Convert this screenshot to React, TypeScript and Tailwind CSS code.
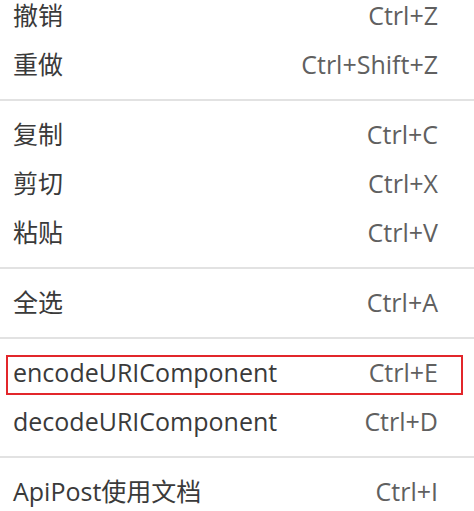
import React from 'react'

type Item = { label: string; shortcut: string; marked?: boolean }

const groups: Item[][] = [
  [
    { label: '撤销', shortcut: 'Ctrl+Z' },
    { label: '重做', shortcut: 'Ctrl+Shift+Z' },
  ],
  [
    { label: '复制', shortcut: 'Ctrl+C' },
    { label: '剪切', shortcut: 'Ctrl+X' },
    { label: '粘贴', shortcut: 'Ctrl+V' },
  ],
  [{ label: '全选', shortcut: 'Ctrl+A' }],
  [
    { label: 'encodeURIComponent', shortcut: 'Ctrl+E', marked: true },
    { label: 'decodeURIComponent', shortcut: 'Ctrl+D' },
  ],
  [{ label: 'ApiPost使用文档', shortcut: 'Ctrl+I' }],
]

function MenuRow({ item, first }: { item: Item; first?: boolean }) {
  return (
    <div
      className={
        first
          ? 'relative flex h-[40px] items-center justify-between pb-[9px] pl-[13px] pr-[36px]'
          : 'relative flex h-[49px] items-center justify-between pl-[13px] pr-[36px]'
      }
    >
      {item.marked && (
        <div className="pointer-events-none absolute left-[6px] right-[11px] top-[7px] bottom-[2px] border-2 border-[#e2262b]" />
      )}
      <span className="text-[#3a3a3a]">{item.label}</span>
      <span className="text-[#606060]">{item.shortcut}</span>
    </div>
  )
}

export default function App() {
  return (
    <div
      className="h-[511px] w-[474px] overflow-hidden bg-white text-[25px] leading-none"
      style={{ fontFamily: '"Open Sans", "Noto Sans CJK SC", sans-serif' }}
    >
      {groups.map((group, gi) => (
        <div key={gi}>
          {gi > 0 && (
            <div className="flex h-[21px] items-center">
              <div className="h-[2px] w-full bg-[#e2e2e2]" />
            </div>
          )}
          {group.map((item, ii) => (
            <MenuRow key={item.label} item={item} first={gi === 0 && ii === 0} />
          ))}
        </div>
      ))}
    </div>
  )
}
